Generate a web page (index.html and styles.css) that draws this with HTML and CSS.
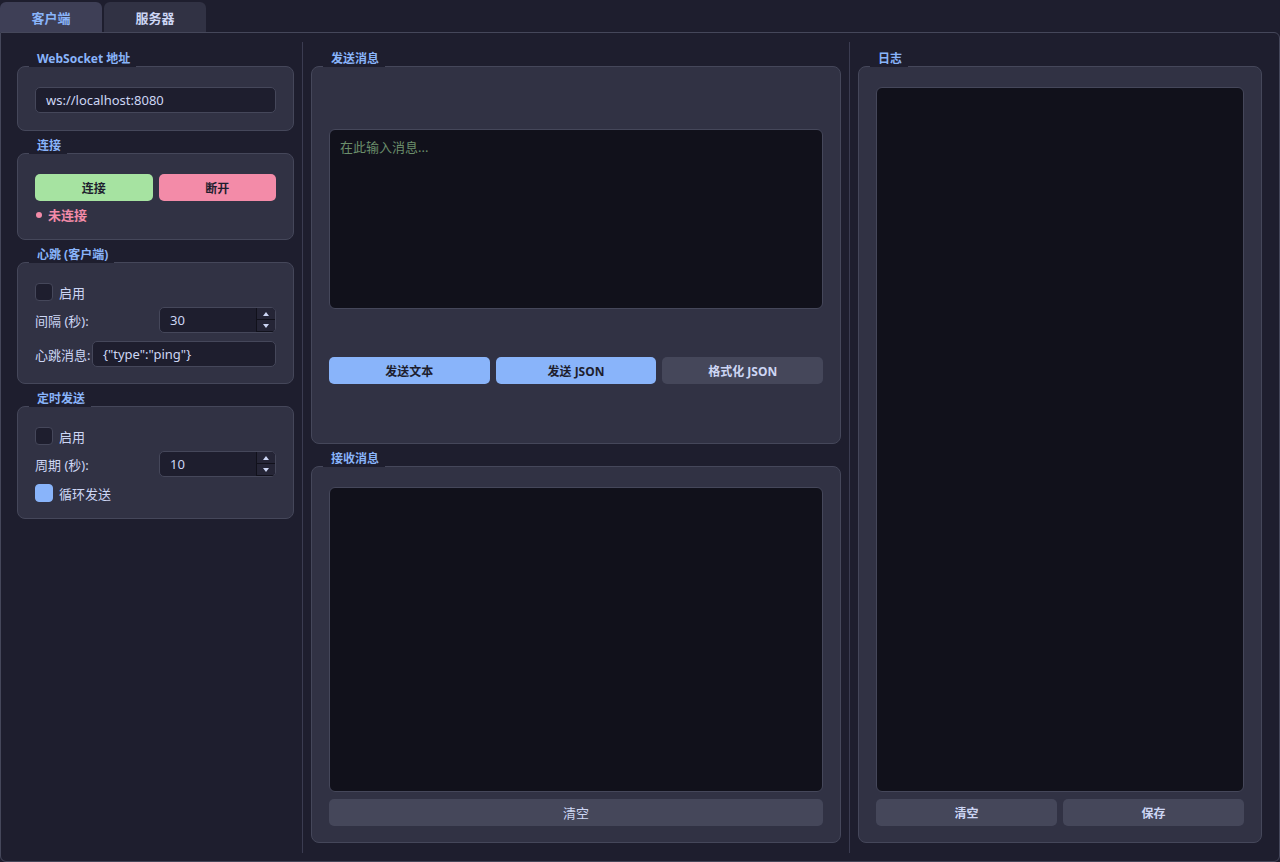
FILE: index.html
```html
<!DOCTYPE html>
<html lang="zh-CN">
<head>
<meta charset="utf-8">
<title>WebSocket 客户端</title>
<link rel="stylesheet" href="styles.css">
</head>
<body>
<div class="app">
  <div class="tabbar">
    <div class="tab active">客户端</div>
    <div class="tab">服务器</div>
  </div>
  <div class="pane">
    <div class="col left">
      <section class="group g-addr">
        <div class="gtitle"><span>WebSocket 地址</span></div>
        <div class="gbox">
          <div class="input">ws://localhost:8080</div>
        </div>
      </section>

      <section class="group">
        <div class="gtitle"><span>连接</span></div>
        <div class="gbox">
          <div class="btnrow">
            <div class="btn green">连接</div>
            <div class="btn pink">断开</div>
          </div>
          <div class="status"><span class="dot"></span>未连接</div>
        </div>
      </section>

      <section class="group">
        <div class="gtitle"><span>心跳 (客户端)</span></div>
        <div class="gbox">
          <div class="check"><span class="cb"></span>启用</div>
          <div class="field">
            <span>间隔 (秒):</span>
            <div class="spin">
              <span class="val">30</span>
              <div class="arrows"><span class="up"></span><span class="down"></span></div>
            </div>
          </div>
          <div class="field f-msg">
            <span>心跳消息:</span>
            <div class="input msg">{"type":"ping"}</div>
          </div>
        </div>
      </section>

      <section class="group">
        <div class="gtitle"><span>定时发送</span></div>
        <div class="gbox">
          <div class="check"><span class="cb"></span>启用</div>
          <div class="field">
            <span>周期 (秒):</span>
            <div class="spin">
              <span class="val">10</span>
              <div class="arrows"><span class="up"></span><span class="down"></span></div>
            </div>
          </div>
          <div class="check c-loop"><span class="cb on"></span>循环发送</div>
        </div>
      </section>
    </div>

    <div class="split s1"></div>

    <div class="col mid">
      <section class="group g-send">
        <div class="gtitle"><span>发送消息</span></div>
        <div class="gbox">
          <div class="textarea send-ta"><span class="ph">在此输入消息...</span></div>
          <div class="btnrow send-btns">
            <div class="btn blue">发送文本</div>
            <div class="btn blue">发送 JSON</div>
            <div class="btn gray">格式化 JSON</div>
          </div>
        </div>
      </section>

      <section class="group g-recv">
        <div class="gtitle"><span>接收消息</span></div>
        <div class="gbox">
          <div class="textarea grow"></div>
          <div class="btnrow bottom-btns">
            <div class="btn gray light">清空</div>
          </div>
        </div>
      </section>
    </div>

    <div class="split s2"></div>

    <div class="col right">
      <section class="group g-log">
        <div class="gtitle"><span>日志</span></div>
        <div class="gbox">
          <div class="textarea grow"></div>
          <div class="btnrow bottom-btns">
            <div class="btn gray">清空</div>
            <div class="btn gray">保存</div>
          </div>
        </div>
      </section>
    </div>
  </div>
</div>
</body>
</html>
```

FILE: styles.css
```css
* { box-sizing: border-box; }

html, body {
  margin: 0;
  height: 100%;
  background: #1e1e2e;
}

body {
  font-family: "Noto Sans", "Noto Sans CJK SC", sans-serif;
  font-size: 13px;
  color: #cdd6f4;
  overflow: hidden;
}

.app {
  width: 1280px;
  height: 862px;
  display: flex;
  flex-direction: column;
}

/* tabs */
.tabbar {
  height: 32px;
  padding-top: 2px;
  display: flex;
  gap: 2px;
}

.tab {
  width: 102px;
  height: 30px;
  border-radius: 6px 6px 0 0;
  background: #313244;
  display: flex;
  align-items: center;
  justify-content: center;
  font-weight: 700;
  font-size: 13px;
  color: #cdd6f4;
}

.tab.active {
  background: #3e3f56;
  color: #89b4fa;
}

/* pane */
.pane {
  flex: 1;
  min-height: 0;
  display: flex;
  border: 1px solid #45475a;
  border-radius: 0 6px 6px 6px;
  padding: 11px 17px 18px 16px;
}

.col {
  display: flex;
  flex-direction: column;
  min-height: 0;
}

.left { width: 277px; }
.mid { width: 530px; }
.right { width: 404px; }

.split {
  width: 1px;
  background: #3b3c51;
  margin: -2px 8px -10px 8px;
}

.s2 { margin-left: 8px; }

/* group boxes */
.group {
  display: flex;
  flex-direction: column;
}

.gtitle {
  height: 22px;
  display: flex;
  align-items: flex-end;
  padding-left: 12px;
}

.gtitle span {
  position: relative;
  z-index: 1;
  line-height: 16px;
  padding: 0 6px 0 8px;
  margin-bottom: -1px;
  background: #1e1e2e;
  color: #89b4fa;
  font-weight: 700;
  font-size: 12px;
}

.gbox {
  background: #313244;
  border: 1px solid #45475a;
  border-radius: 8px;
  padding: 20px 17px 16px;
}

.g-addr .gbox { padding-bottom: 17px; }

/* inputs */
.input {
  height: 26px;
  background: #1e1e2e;
  border: 1px solid #45475a;
  border-radius: 5px;
  padding: 0 10px;
  display: flex;
  align-items: center;
  font-size: 13px;
  color: #cdd6f4;
}

.input.msg { width: 184px; }

/* buttons */
.btnrow {
  display: flex;
  gap: 6px;
}

.btn {
  flex: 1;
  height: 27px;
  border-radius: 5px;
  display: flex;
  align-items: center;
  justify-content: center;
  font-weight: 700;
  font-size: 12px;
  color: #1e1e2e;
}

.btn.green { background: #a6e3a1; }
.btn.pink { background: #f38ba8; }
.btn.blue { background: #89b4fa; }
.btn.gray { background: #45475a; color: #cdd6f4; }
.btn.light { font-weight: 400; font-size: 13px; }

.status {
  margin-top: 6px;
  line-height: 16px;
  color: #f38ba8;
  font-weight: 700;
  font-size: 13px;
  display: flex;
  align-items: center;
}

.dot {
  width: 6px;
  height: 6px;
  border-radius: 50%;
  background: #f38ba8;
  margin: 0 6px 0 1px;
}

/* checkboxes */
.check {
  display: flex;
  align-items: center;
  gap: 6px;
  height: 18px;
}

.cb {
  width: 18px;
  height: 18px;
  border: 1px solid #45475a;
  border-radius: 4px;
  background: #1e1e2e;
}

.cb.on {
  background: #89b4fa;
  border-color: #89b4fa;
}

.c-loop { margin-top: 7px; }

/* fields */
.field {
  display: flex;
  align-items: center;
  justify-content: space-between;
  margin-top: 6px;
}

.f-msg { margin-top: 8px; }

.spin {
  width: 117px;
  height: 26px;
  background: #1e1e2e;
  border: 1px solid #45475a;
  border-radius: 5px;
  display: flex;
  overflow: hidden;
}

.spin .val {
  flex: 1;
  display: flex;
  align-items: center;
  padding-left: 10px;
}

.arrows {
  width: 19px;
  display: flex;
  flex-direction: column;
  border-left: 1px solid #11111b;
}

.arrows span {
  flex: 1;
  display: flex;
  align-items: center;
  justify-content: center;
  background: #252536;
}

.arrows .up { border-bottom: 1px solid #11111b; }
.arrows .down { border-bottom: 1px solid #11111b; }

.arrows .up::before {
  content: "";
  border-left: 3.5px solid transparent;
  border-right: 3.5px solid transparent;
  border-bottom: 4px solid #cdd6f4;
}

.arrows .down::before {
  content: "";
  border-left: 3.5px solid transparent;
  border-right: 3.5px solid transparent;
  border-top: 4px solid #cdd6f4;
}

/* text areas */
.textarea {
  background: #11111b;
  border: 1px solid #45475a;
  border-radius: 6px;
  padding: 9px 10px;
  line-height: 16px;
}

.ph { color: #6b8e6b; font-size: 13px; }

.g-send, .g-recv, .g-log {
  flex: 1;
  min-height: 0;
}

.g-send .gbox,
.g-recv .gbox,
.g-log .gbox {
  flex: 1;
  min-height: 0;
  display: flex;
  flex-direction: column;
}

.g-send .gbox { padding-top: 62px; }

.send-ta { height: 180px; }

.send-btns { margin-top: 48px; }

.grow {
  flex: 1;
  min-height: 0;
}

.bottom-btns { margin-top: 7px; }
```
